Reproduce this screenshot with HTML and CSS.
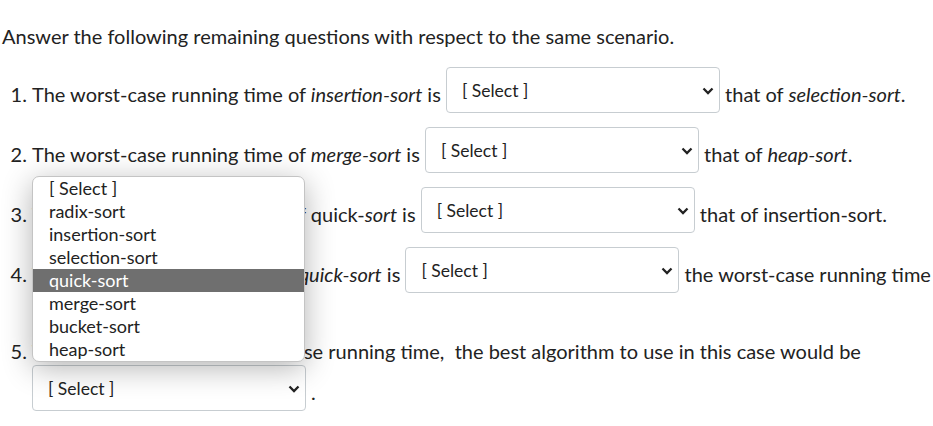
FILE: index.html
```html
<!DOCTYPE html>
<html>
<head>
  <title>Sorting Quiz</title>
  <link rel="stylesheet" href="styles.css">
</head>
<body>

  <p class="intro">Answer the following remaining questions with respect to the same scenario.</p>

  <ol class="questions">
    <li>
      The worst-case running time of <em>insertion-sort</em> is
      <span class="pick">
        <select class="answer">
          <option>[ Select ]</option>
          <option>less than</option>
          <option>equal to</option>
          <option>greater than</option>
        </select>
        <svg class="chev" width="12" height="8" viewBox="0 0 12 8"><path d="M1.5 1.5 L6 6 L10.5 1.5" fill="none" stroke="#222" stroke-width="2.3"/></svg>
      </span>
      that of <em>selection-sort</em>.
    </li>
    <li>
      The worst-case running time of <em>merge-sort</em> is
      <span class="pick">
        <select class="answer">
          <option>[ Select ]</option>
          <option>less than</option>
          <option>equal to</option>
          <option>greater than</option>
        </select>
        <svg class="chev" width="12" height="8" viewBox="0 0 12 8"><path d="M1.5 1.5 L6 6 L10.5 1.5" fill="none" stroke="#222" stroke-width="2.3"/></svg>
      </span>
      that of <em>heap-sort</em>.
    </li>
    <li>
      The worst-case running time of quick-<em>sort</em> is
      <span class="pick">
        <select class="answer">
          <option>[ Select ]</option>
          <option>less than</option>
          <option>equal to</option>
          <option>greater than</option>
        </select>
        <svg class="chev" width="12" height="8" viewBox="0 0 12 8"><path d="M1.5 1.5 L6 6 L10.5 1.5" fill="none" stroke="#222" stroke-width="2.3"/></svg>
      </span>
      that of insertion-sort.
    </li>
    <li class="long">
      The best-case running time of <em>quick-sort</em> is
      <span class="pick">
        <select class="answer">
          <option>[ Select ]</option>
          <option>less than</option>
          <option>equal to</option>
          <option>greater than</option>
        </select>
        <svg class="chev" width="12" height="8" viewBox="0 0 12 8"><path d="M1.5 1.5 L6 6 L10.5 1.5" fill="none" stroke="#222" stroke-width="2.3"/></svg>
      </span>
      the worst-case running time of bucket-sort.
    </li>
    <li>
      To guarantee the best worst-case running time,&nbsp; the best algorithm to use in this case would be
      <span class="pick">
        <select class="answer">
          <option>[ Select ]</option>
          <option>radix-sort</option>
          <option>insertion-sort</option>
          <option>selection-sort</option>
          <option>quick-sort</option>
          <option>merge-sort</option>
          <option>bucket-sort</option>
          <option>heap-sort</option>
        </select>
        <svg class="chev" width="12" height="8" viewBox="0 0 12 8"><path d="M1.5 1.5 L6 6 L10.5 1.5" fill="none" stroke="#222" stroke-width="2.3"/></svg>
      </span> .
    </li>
  </ol>

  <!-- open option list of the last select -->
  <ul class="popup">
    <li>[ Select ]</li>
    <li>radix-sort</li>
    <li>insertion-sort</li>
    <li>selection-sort</li>
    <li class="active">quick-sort</li>
    <li>merge-sort</li>
    <li>bucket-sort</li>
    <li>heap-sort</li>
  </ul>

</body>
</html>
```

FILE: styles.css
```css
* { box-sizing: border-box; }

body {
  margin: 0;
  padding: 0 0 0 2px;
  font-family: Lato, "Liberation Sans", sans-serif;
  font-size: 20px;
  line-height: 1.4;
  color: #222;
  background: white;
  position: relative;
}

.intro {
  margin: 22px 0 0 0;
}

.questions {
  margin: 17px 0 0 0;
  padding-left: 30px;
}

.questions li {
  margin-bottom: 14px;
}

.questions li.long {
  margin-bottom: 16px;
}

.pick {
  display: inline-block;
  position: relative;
  font-size: 17.5px;
  line-height: 1;
  vertical-align: 5px;
}

.answer {
  appearance: none;
  -webkit-appearance: none;
  width: 274px;
  height: 46px;
  padding: 0 30px 0 15px;
  margin: 0;
  border: 1px solid #c7cdd1;
  border-radius: 4px;
  background: white;
  color: #222;
  font-family: Lato, "Liberation Sans", sans-serif;
  font-size: 17.5px;
  vertical-align: baseline;
}

.chev {
  position: absolute;
  right: 6px;
  top: 20px;
  pointer-events: none;
}

.popup {
  position: absolute;
  left: 32px;
  top: 176px;
  width: 273px;
  margin: 0;
  padding: 0;
  list-style: none;
  background: white;
  border: 1px solid #c4c4c4;
  border-radius: 7px;
  box-shadow: 0 6px 30px rgba(0, 0, 0, 0.3);
  overflow: hidden;
  font-size: 18px;
}

.popup li {
  height: 23px;
  line-height: 23px;
  padding-left: 16px;
}

.popup .active {
  background: #6f6f6f;
  color: white;
}
```
